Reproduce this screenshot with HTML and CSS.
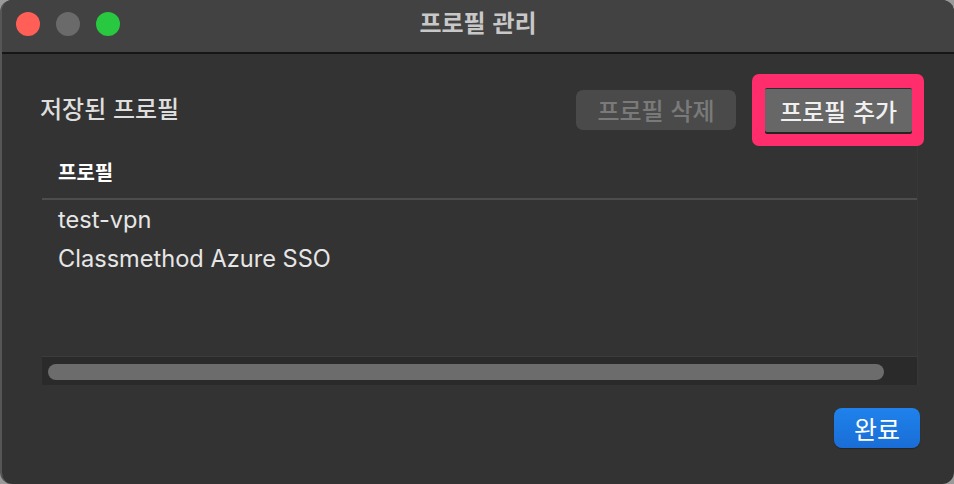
FILE: index.html
```html
<!DOCTYPE html>
<html lang="ko">
<head>
  <meta charset="UTF-8">
  <title>프로필 관리</title>
  <meta name="viewport" content="width=device-width, initial-scale=1.0">
  <link rel="stylesheet" href="styles.css">
</head>
<body>

<div class="window">
  <div class="titlebar">
    <div class="lights">
      <span class="light red"></span>
      <span class="light idle"></span>
      <span class="light green"></span>
    </div>
    <div class="title">프로필 관리</div>
    <div></div>
  </div>

  <div class="content">
    <div class="toolbar">
      <div class="label">저장된 프로필</div>
      <div class="actions">
        <button class="btn btn-disabled" disabled>프로필 삭제</button>
        <div class="highlight">
          <button class="btn btn-add">프로필 추가</button>
        </div>
      </div>
    </div>

    <div class="table">
      <div class="thead">프로필</div>
      <div class="tbody">
        <div class="row">test-vpn</div>
        <div class="row">Classmethod Azure SSO</div>
      </div>
      <div class="hscroll"><div class="thumb"></div></div>
    </div>

    <div class="footer">
      <button class="btn btn-done">완료</button>
    </div>
  </div>
</div>

</body>
</html>
```

FILE: styles.css
```css
* { box-sizing: border-box; }
body { margin: 0; background: #9a9a9a; font-family: Inter, "Noto Sans CJK KR", sans-serif; }

.window {
  width: 954px; height: 484px; background: #333333;
  border-left: 2px solid #565656; border-radius: 12px; overflow: hidden;
}

.titlebar {
  height: 54px; background: #424242; border-bottom: 2px solid #161616;
  display: grid; grid-template-columns: 1fr auto 1fr; align-items: start;
}
.lights { display: flex; gap: 16px; padding: 12px 0 0 14px; }
.light { width: 24px; height: 24px; border-radius: 50%; }
.light.red { background: #ff5f57; }
.light.idle { background: #6a6a6a; }
.light.green { background: #28c840; }
.title {
  padding-top: 10px; color: #c8c8c8; font-size: 24px; font-weight: 700; line-height: 1;
  font-family: "Noto Sans CJK KR", sans-serif;
}

.content { padding: 0 30px 0 38px; }

.toolbar {
  margin-top: 20px; height: 72px;
  display: flex; align-items: center; justify-content: space-between;
}
.label {
  color: #dedede; font-size: 24px; font-weight: 500; line-height: 1; margin-top: -4px;
  font-family: "Noto Sans CJK KR", sans-serif;
}
.actions { display: flex; align-items: center; gap: 16px; }

.btn {
  border: none; font-family: "Noto Sans CJK KR", sans-serif; font-size: 24px;
  font-weight: 500; line-height: 1; cursor: pointer;
}
.btn-disabled {
  width: 160px; height: 40px; border-radius: 7px;
  background: #4a4a4a; color: #7a7a7a;
}
.highlight { background: #ff2d6c; border-radius: 7px; padding: 14px 12px 14px 13px; }
.btn-add {
  width: 147px; height: 44px; border-radius: 2px;
  background: #676767; color: #f0f0f0;
  border-top: 1px solid #2e2e2e; box-shadow: 0 2px 0 #242424;
}

.table { margin-left: 2px; width: 876px; border-right: 1px solid #383838; }
.thead {
  height: 54px; padding: 16px 0 0 16px; border-bottom: 2px solid #4d4d4d;
  color: #ffffff; font-size: 20px; font-weight: 700; line-height: 1;
  font-family: "Noto Sans CJK KR", sans-serif;
}
.tbody { height: 156px; }
.row { height: 39px; padding-left: 16px; line-height: 39px; color: #e6e6e6; font-size: 23.6px; }
.hscroll {
  height: 29px; background: #2a2a2a; border-top: 1px solid #3c3c3c;
  padding: 7px 33px 0 6px;
}
.thumb { height: 16px; border-radius: 8px; background: #6c6c6c; }

.footer { display: flex; justify-content: flex-end; padding: 23px 4px 0 0; }
.btn-done {
  width: 86px; height: 40px; border-radius: 8px; font-size: 25px; font-weight: 400;
  background: linear-gradient(#1f82ec, #1a6dd6); color: #ffffff;
  box-shadow: 0 1px 1px rgba(0,0,0,0.3);
}
```
